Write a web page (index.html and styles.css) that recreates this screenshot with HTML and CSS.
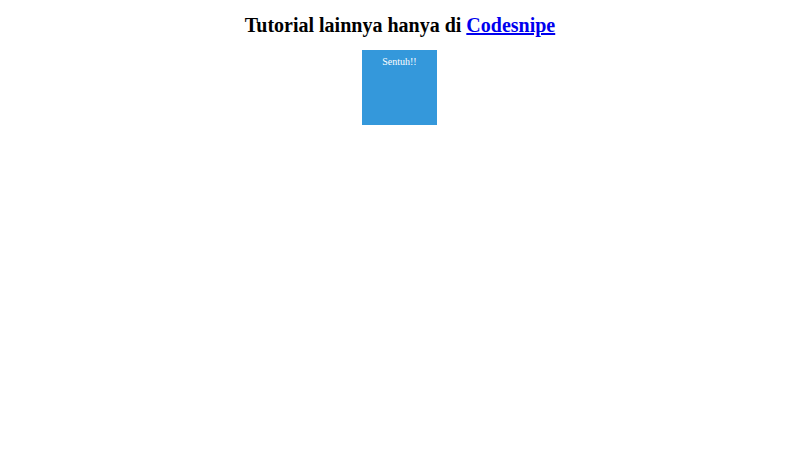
FILE: index.html
```html
<!DOCTYPE html>
<html>
<head>
<meta charset="utf-8">
<link rel="stylesheet" href="styles.css">
</head>
<body>
<h2 class="title">Tutorial lainnya hanya di <a href="#" class="link">Codesnipe</a></h2>
<div class="box">Sentuh!!</div>
</body>
</html>
```
FILE: styles.css
```css
body {
  margin: 0;
  padding: 14px 8px 0;
  font-family: "Liberation Serif", serif;
}
.title {
  margin: 0 0 14px;
  text-align: center;
  font-size: 20px;
  line-height: 22px;
  font-weight: bold;
}
.link {
  color: #0000ee;
}
.box {
  width: 75px;
  height: 75px;
  margin: 0 0 0 calc(50% - 38px);
  background: #3498db;
  color: #fff;
  font-size: 10px;
  text-align: center;
  padding-top: 6px;
  box-sizing: border-box;
}
```
